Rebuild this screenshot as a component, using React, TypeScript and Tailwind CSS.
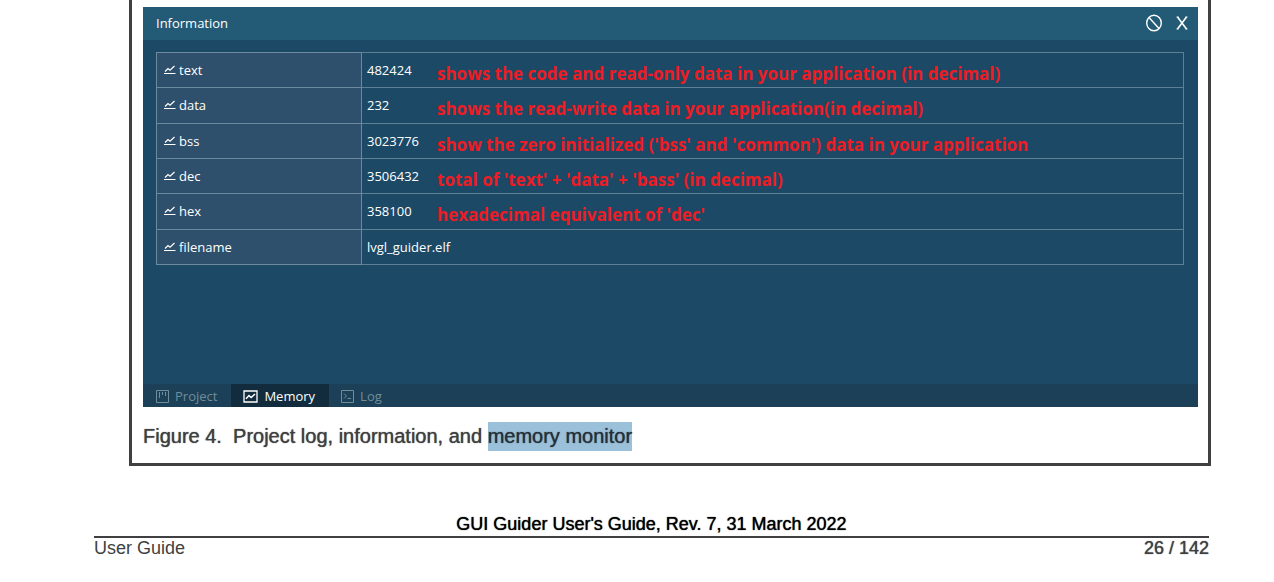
import { useState } from "react";
import type { ReactNode } from "react";

const rows = [
  { name: "text", value: "482424", note: "shows the code and read-only data in your application (in decimal)" },
  { name: "data", value: "232", note: "shows the read-write data in your application(in decimal)" },
  { name: "bss", value: "3023776", note: "show the zero initialized ('bss' and 'common') data in your application" },
  { name: "dec", value: "3506432", note: "total of 'text' + 'data' + 'bass' (in decimal)" },
  { name: "hex", value: "358100", note: "hexadecimal equivalent of 'dec'" },
  { name: "filename", value: "lvgl_guider.elf", note: "" },
];

const tabs = [
  { name: "Project", icon: <ProjectIcon /> },
  { name: "Memory", icon: <MemoryIcon /> },
  { name: "Log", icon: <LogIcon /> },
];

export default function App() {
  return (
    <main className="min-h-screen bg-white pr-[63px] pl-[94px] font-['Liberation_Sans',Arial,sans-serif] text-lg text-[#403f41]">
      <figure className="ml-[35px] border-x-[3px] border-b-[3px] border-[#403f41] pt-[7px] pr-[10px] pb-3 pl-[11px]">
        <InfoPanel />
        <figcaption className="mt-[15px] text-xl leading-[29px] [text-shadow:0_0_1px_currentColor]">
          Figure 4.&nbsp; Project log, information, and{" "}
          <mark className="inline-block bg-[#9bc0d9] text-[#273039]">memory monitor</mark>
        </figcaption>
      </figure>

      <footer className="mt-[46px] mr-[2px]">
        <p className="border-b-2 border-[#403f41] text-center text-lg leading-6 text-black [text-shadow:0_0_1px_currentColor]">
          GUI Guider User's Guide, Rev. 7, 31 March 2022
        </p>
        <div className="flex justify-between leading-5">
          <span>User Guide</span>
          <span className="[text-shadow:0_0_1px_currentColor]">26 / 142</span>
        </div>
      </footer>
    </main>
  );
}

function InfoPanel() {
  const [active, setActive] = useState("Memory");

  return (
    <section className="bg-[#1c4966] font-['Open_Sans','Noto_Sans',sans-serif] text-white">
      <header className="flex h-[33px] items-center justify-between bg-[#235a75] pr-[10px] pb-px pl-[13px]">
        <h2 className="text-[13px]">Information</h2>
        <div className="flex items-center gap-[14px]">
          <button type="button" aria-label="Clear">
            <ClearIcon />
          </button>
          <button type="button" aria-label="Close">
            <CloseIcon />
          </button>
        </div>
      </header>

      <div className="pt-3 pr-[14px] pb-[119px] pl-[13px]">
        <table className="h-[213px] w-full table-fixed border-collapse text-[13px]">
          <tbody>
            {rows.map((row) => (
              <tr key={row.name} className="h-[35px]">
                <th
                  scope="row"
                  className="w-[205px] border border-[#6b8a9d] bg-[#2e506c] p-0 pl-[7px] text-left font-normal"
                >
                  <span className="flex items-center gap-[3px]">
                    <TrendIcon />
                    {row.name}
                  </span>
                </th>
                <td className="border border-[#5d8094] p-0 pl-[5px]">
                  <div className="flex items-center">
                    <span className="w-[70px] shrink-0 whitespace-nowrap">{row.value}</span>
                    {row.note && (
                      <span className="pt-2 text-[17px] leading-5 font-bold whitespace-nowrap text-[#ed1c24]">
                        {row.note}
                      </span>
                    )}
                  </div>
                </td>
              </tr>
            ))}
          </tbody>
        </table>
      </div>

      <nav className="flex h-[23px] bg-[#1b4057] pl-px text-[13px]">
        {tabs.map((tab) => (
          <Tab key={tab.name} active={tab.name === active} onClick={() => setActive(tab.name)} icon={tab.icon}>
            {tab.name}
          </Tab>
        ))}
      </nav>
    </section>
  );
}

function Tab({
  active,
  icon,
  onClick,
  children,
}: {
  active: boolean;
  icon: ReactNode;
  onClick: () => void;
  children: ReactNode;
}) {
  return (
    <button
      type="button"
      onClick={onClick}
      aria-pressed={active}
      className={`flex items-center gap-[6px] pt-[2px] pr-[14px] pl-3 ${active ? "bg-[#122c3e] text-white" : "text-[#728d9a]"}`}
    >
      {icon}
      {children}
    </button>
  );
}

function TrendIcon() {
  return (
    <svg viewBox="0 0 12 12" className="h-3 w-3" fill="none" stroke="currentColor" aria-hidden="true">
      <path d="M1 7.5 4 4.5 6 6.2 10.5 2" strokeWidth="1.2" />
      <path d="M0 9.5h11.5" />
    </svg>
  );
}

function ClearIcon() {
  return (
    <svg viewBox="0 0 16 18" className="h-[18px] w-4" fill="none" stroke="currentColor" strokeWidth="1.4" aria-hidden="true">
      <ellipse cx="8" cy="9" rx="7.3" ry="7.8" />
      <path d="M3 3.5 13 14.5" />
    </svg>
  );
}

function CloseIcon() {
  return (
    <svg viewBox="0 0 12 14" className="h-[14px] w-3" fill="none" stroke="currentColor" strokeWidth="1.6" aria-hidden="true">
      <path d="M1.5 1 10.5 13M10.5 1 1.5 13" />
      <path d="M.5 1h2M9.5 1h2M.5 13h2M9.5 13h2" strokeWidth="1" />
    </svg>
  );
}

function ProjectIcon() {
  return (
    <svg viewBox="0 0 13 13" className="h-[13px] w-[13px]" fill="none" stroke="currentColor" aria-hidden="true">
      <path d="M.5.5h12v12H.5zM3.5 2v6M6.5 2v3M9.5 2v4" />
    </svg>
  );
}

function MemoryIcon() {
  return (
    <svg viewBox="0 0 15 13" className="h-[13px] w-[15px]" fill="none" stroke="currentColor" aria-hidden="true">
      <path d="M1 1h13v11H1z" strokeWidth="1.3" />
      <path d="M3 8.8 6 5.6 8.2 7.6 12 4" strokeWidth="1.5" />
    </svg>
  );
}

function LogIcon() {
  return (
    <svg viewBox="0 0 13 13" className="h-[13px] w-[13px]" fill="none" stroke="currentColor" aria-hidden="true">
      <path d="M.5.5h12v12H.5zM3 3.5 5.5 6 3 8.5M6.5 8.5H10" />
    </svg>
  );
}
